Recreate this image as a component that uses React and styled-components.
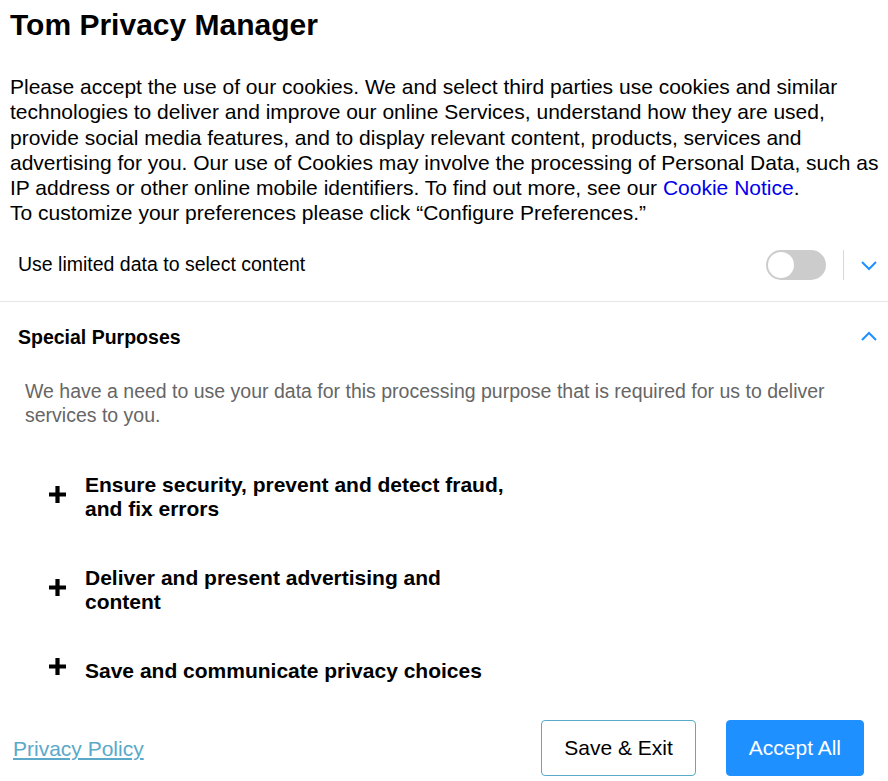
import React from "react";
import styled, { createGlobalStyle } from "styled-components";

const GlobalStyle = createGlobalStyle`
  body {
    margin: 0;
    background: #fff;
    font-family: "Liberation Sans", Arial, sans-serif;
    color: #000;
  }
`;

const Page = styled.div`
  width: 888px;
  height: 781px;
  display: flex;
  flex-direction: column;
  overflow: hidden;
`;

const Title = styled.h1`
  margin: 7px 0 0 10px;
  font-size: 30px;
  line-height: 36px;
  font-weight: 700;
`;

const Intro = styled.p`
  margin: 31px 0 0 10px;
  font-size: 21px;
  line-height: 25.3px;
  padding-right: 6px;
`;

const NoticeLink = styled.a`
  color: #0000ee;
  text-decoration: none;
`;

const ToggleRow = styled.div`
  display: flex;
  align-items: center;
  height: 48px;
  margin-top: 15px;
  padding: 0 10px 12px 18px;
  border-bottom: 1px solid #e6e6e6;
`;

const RowLabel = styled.span`
  flex: 1;
  font-size: 19.5px;
`;

const Switch = styled.span`
  width: 60px;
  height: 30px;
  border-radius: 15px;
  background: #cccccc;
  position: relative;
  &::after {
    content: "";
    position: absolute;
    left: 2px;
    top: 2px;
    width: 26px;
    height: 26px;
    border-radius: 50%;
    background: #fff;
  }
`;

const Divider = styled.span`
  width: 1px;
  height: 30px;
  background: #d8d8d8;
  margin: 0 16px 0 17px;
`;

const Chevron = styled.svg`
  width: 18px;
  height: 18px;
  display: block;
`;

const SectionHead = styled.div`
  display: flex;
  align-items: center;
  justify-content: space-between;
  padding: 24px 10px 0 18px;
`;

const SectionTitle = styled.h2`
  margin: 0;
  font-size: 19.5px;
  font-weight: 700;
`;

const SectionDesc = styled.p`
  margin: 30px 0 0 25px;
  font-size: 19.5px;
  line-height: 24px;
  color: #666;
  padding-right: 40px;
`;

const PurposeList = styled.ul`
  list-style: none;
  margin: 46px 0 0 0;
  padding: 0 0 0 48px;
  display: flex;
  flex-direction: column;
  gap: 45px;
`;

const Purpose = styled.li`
  display: flex;
  align-items: flex-start;
  gap: 18px;
`;

const PlusIcon = styled.svg`
  width: 19px;
  height: 19px;
  flex: none;
  margin-top: ${(p) => p.$offset}px;
`;

const PurposeText = styled.span`
  font-size: 21px;
  line-height: 24px;
  font-weight: 700;
  max-width: 426px;
`;

const Footer = styled.div`
  margin-top: auto;
  display: flex;
  align-items: center;
  padding: 0 24px 5px 13px;
  gap: 30px;
`;

const PolicyLink = styled.a`
  flex: 1;
  font-size: 21px;
  color: #5aa9c9;
  text-decoration: underline;
  margin-top: 2px;
`;

const Button = styled.button`
  height: 56px;
  padding: 0 22px;
  border-radius: 4px;
  font-family: "Liberation Sans", Arial, sans-serif;
  font-size: 21px;
  border: 1px solid ${(p) => (p.$primary ? "#1e90ff" : "#5aa9c9")};
  background: ${(p) => (p.$primary ? "#1e90ff" : "#fff")};
  color: ${(p) => (p.$primary ? "#fff" : "#000")};
`;

const Plus = ({ offset }) => (
  <PlusIcon viewBox="0 0 19 19" $offset={offset}>
    <path d="M9.5 1v17M1 9.5h17" stroke="#000" strokeWidth="4.2" />
  </PlusIcon>
);

const purposes = [
  { text: "Ensure security, prevent and detect fraud, and fix errors", offset: 12 },
  { text: "Deliver and present advertising and content", offset: 12 },
  { text: "Save and communicate privacy choices", offset: -2 },
];

export default function App() {
  return (
    <Page>
      <GlobalStyle />
      <Title>Tom Privacy Manager</Title>
      <Intro>
        Please accept the use of our cookies. We and select third parties use
        cookies and similar technologies to deliver and improve our online
        Services, understand how they are used, provide social media features,
        and to display relevant content, products, services and advertising for
        you. Our use of Cookies may involve the processing of Personal Data, such
        as IP address or other online mobile identifiers. To find out more, see
        our <NoticeLink href="#">Cookie Notice</NoticeLink>.
        <br />
        To customize your preferences please click “Configure Preferences.”
      </Intro>
      <ToggleRow>
        <RowLabel>Use limited data to select content</RowLabel>
        <Switch />
        <Divider />
        <Chevron viewBox="0 0 18 18">
          <path d="M2 6l7 7 7-7" fill="none" stroke="#1e90ff" strokeWidth="2" />
        </Chevron>
      </ToggleRow>
      <SectionHead>
        <SectionTitle>Special Purposes</SectionTitle>
        <Chevron viewBox="0 0 18 18">
          <path d="M2 12l7-7 7 7" fill="none" stroke="#1e90ff" strokeWidth="2" />
        </Chevron>
      </SectionHead>
      <SectionDesc>
        We have a need to use your data for this processing purpose that is
        required for us to deliver services to you.
      </SectionDesc>
      <PurposeList>
        {purposes.map((p) => (
          <Purpose key={p.text}>
            <Plus offset={p.offset} />
            <PurposeText>{p.text}</PurposeText>
          </Purpose>
        ))}
      </PurposeList>
      <Footer>
        <PolicyLink href="#">Privacy Policy</PolicyLink>
        <Button>Save &amp; Exit</Button>
        <Button $primary>Accept All</Button>
      </Footer>
    </Page>
  );
}
